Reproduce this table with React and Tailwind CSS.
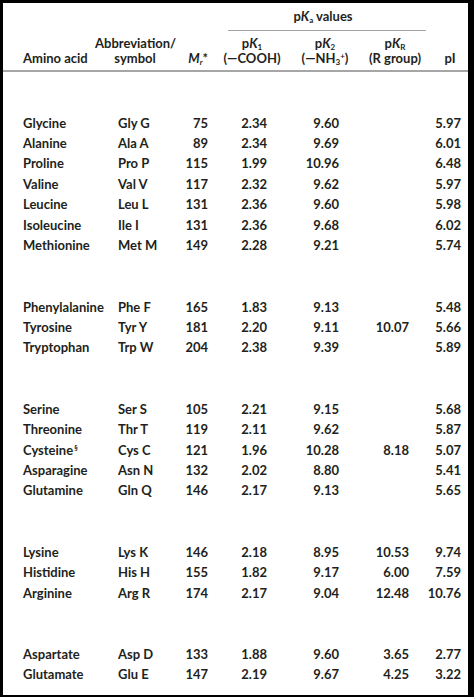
import React from "react";

// amino acid groups, blank rows between them
const groups = [
  [
    ["Glycine", "Gly G", "75", "2.34", "9.60", "", "5.97"],
    ["Alanine", "Ala A", "89", "2.34", "9.69", "", "6.01"],
    ["Proline", "Pro P", "115", "1.99", "10.96", "", "6.48"],
    ["Valine", "Val V", "117", "2.32", "9.62", "", "5.97"],
    ["Leucine", "Leu L", "131", "2.36", "9.60", "", "5.98"],
    ["Isoleucine", "Ile I", "131", "2.36", "9.68", "", "6.02"],
    ["Methionine", "Met M", "149", "2.28", "9.21", "", "5.74"],
  ],
  [
    ["Phenylalanine", "Phe F", "165", "1.83", "9.13", "", "5.48"],
    ["Tyrosine", "Tyr Y", "181", "2.20", "9.11", "10.07", "5.66"],
    ["Tryptophan", "Trp W", "204", "2.38", "9.39", "", "5.89"],
  ],
  [
    ["Serine", "Ser S", "105", "2.21", "9.15", "", "5.68"],
    ["Threonine", "Thr T", "119", "2.11", "9.62", "", "5.87"],
    ["Cysteine", "Cys C", "121", "1.96", "10.28", "8.18", "5.07", true],
    ["Asparagine", "Asn N", "132", "2.02", "8.80", "", "5.41"],
    ["Glutamine", "Gln Q", "146", "2.17", "9.13", "", "5.65"],
  ],
  [
    ["Lysine", "Lys K", "146", "2.18", "8.95", "10.53", "9.74"],
    ["Histidine", "His H", "155", "1.82", "9.17", "6.00", "7.59"],
    ["Arginine", "Arg R", "174", "2.17", "9.04", "12.48", "10.76"],
  ],
  [
    ["Aspartate", "Asp D", "133", "1.88", "9.60", "3.65", "2.77"],
    ["Glutamate", "Glu E", "147", "2.19", "9.67", "4.25", "3.22"],
  ],
];

const cols = "grid grid-cols-[20px_95px_60px_30px_59px_72px_70px_52px]";
const headCols = "grid grid-cols-[20px_72px_80px_33px_88px_58px_82px_28px]";

function Sub({ children, italic }) {
  return (
    <span className={`relative top-[2px] text-[8px] leading-none ${italic ? "italic" : ""}`}>
      {children}
    </span>
  );
}

function Sup({ children }) {
  return <span className="relative -top-[4px] text-[8px] leading-none">{children}</span>;
}

function Blank() {
  return <div className="h-[20.44px]" />;
}

function Row({ r }) {
  return (
    <div className={`${cols} h-[20.44px] items-center leading-none`}>
      <div />
      <div>
        {r[0]}
        {r[7] && <span className="relative -top-[4px] text-[7px] ml-[1px] leading-none">§</span>}
      </div>
      <div>{r[1]}</div>
      <div className="text-right">{r[2]}</div>
      <div className="text-right">{r[3]}</div>
      <div className="text-right">{r[4]}</div>
      <div className="text-right">{r[5]}</div>
      <div className="text-right">{r[6]}</div>
    </div>
  );
}

function PK({ sub }) {
  return (
    <span>
      p<i>K</i>
      <Sub>{sub}</Sub>
    </span>
  );
}

export default function App() {
  return (
    <div className="w-[474px] h-[697px] bg-black pt-[3px] pl-[3px] pr-[6px] pb-[2px] font-['Lato',sans-serif] font-bold text-[13px] text-[#231f20]">
      <div className="h-full bg-white flex flex-col">
        {/* header */}
        <div className="pt-[5px]">
          <div className={headCols}>
            <div className="col-start-5 col-span-3 ml-[20px] mr-[10px] border-b-[1.5px] border-[#a3a3a3] text-center leading-[16px] pb-[6px] pr-[8px]">
              <PK sub="a" /> values
            </div>
          </div>
          <div className={`${headCols} leading-[15px] pt-[5px] pb-[4px] border-b-2 border-[#a6a6a6]`}>
            <div />
            <div className="self-end">Amino acid</div>
            <div className="text-center">
              Abbreviation/
              <br />
              symbol
            </div>
            <div className="self-end text-right">
              <i>M</i>
              <Sub italic>r</Sub>*
            </div>
            <div className="text-center">
              <PK sub="1" />
              <br />
              (—COOH)
            </div>
            <div className="text-center">
              <PK sub="2" />
              <br />
              (—NH<Sub>3</Sub>
              <Sup>+</Sup>)
            </div>
            <div className="text-center">
              <PK sub="R" />
              <br />
              (R group)
            </div>
            <div className="self-end text-center">pI</div>
          </div>
        </div>

        {/* body */}
        <div>
          {groups.map((g, gi) => (
            <div key={gi}>
              <Blank />
              <Blank />
              {g.map((r) => (
                <Row key={r[0]} r={r} />
              ))}
            </div>
          ))}
        </div>
      </div>
    </div>
  );
}
